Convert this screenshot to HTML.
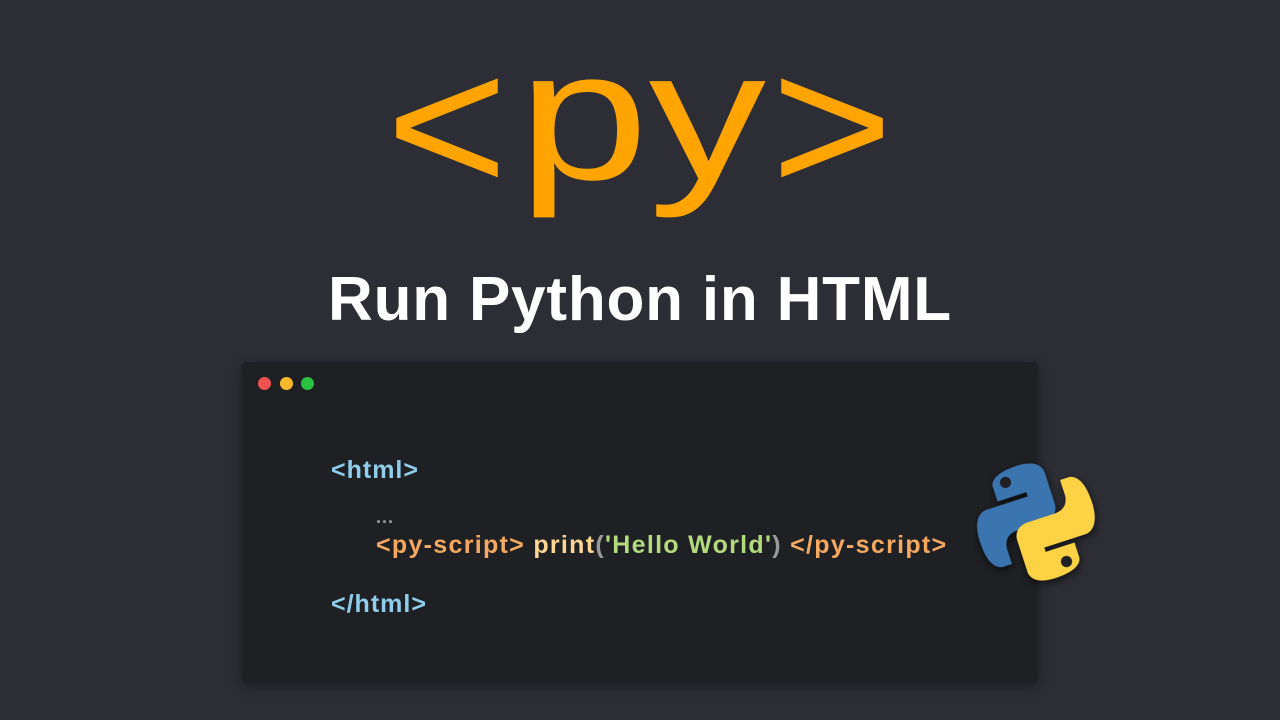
<!DOCTYPE html>
<html><head><meta charset="utf-8"><style>
body{margin:0;width:1280px;height:720px;background:#2d2e35;overflow:hidden;position:relative;font-family:"Liberation Sans",sans-serif}
.title{position:absolute;left:0;width:1280px;top:264px;text-align:center;color:#fff;font-weight:bold;font-size:62px;line-height:72px;letter-spacing:0.8px}
.card{position:absolute;left:242px;top:362px;width:796px;height:321px;background:#1f2024;border-radius:4px;box-shadow:0 4px 12px rgba(0,0,0,.35)}
.dot{position:absolute;top:15px;width:13px;height:13px;border-radius:50%}
.code{position:absolute;font-weight:bold;font-size:25px;white-space:pre;line-height:30px;letter-spacing:1px}
.b{color:#8fcdeb}.o{color:#f4a860}.y{color:#fcd692}.g{color:#b4da7e}.w{color:#9a9a9a}
</style></head><body>
<svg style="position:absolute;left:0;top:0" width="1280" height="260">
<g fill="#ffa400" font-family="Liberation Sans, sans-serif">
<text x="386" y="192" font-size="195" textLength="122" lengthAdjust="spacingAndGlyphs">&lt;</text>
<text x="518" y="179" font-size="195" textLength="248" lengthAdjust="spacingAndGlyphs" transform="translate(0,179) scale(1,0.95) translate(0,-179)">py</text>
<text x="771" y="192" font-size="195" textLength="122" lengthAdjust="spacingAndGlyphs">&gt;</text>
</g></svg>
<div class="title">Run Python in HTML</div>
<div class="card">
<div class="dot" style="left:16px;background:#f0534f"></div>
<div class="dot" style="left:38px;background:#f7b92b"></div>
<div class="dot" style="left:59px;background:#29c140"></div>
<div class="code b" style="left:89px;top:93px">&lt;html&gt;</div>
<div class="code w" style="left:134px;top:140px;font-size:18px">...</div>
<div class="code" style="left:134px;top:168px;letter-spacing:1.3px"><span class="o">&lt;py-script&gt;</span> <span class="y">print</span><span class="w">(</span><span class="g">'Hello World'</span><span class="w">)</span> <span class="o">&lt;/py-script&gt;</span></div>
<div class="code b" style="left:89px;top:227px">&lt;/html&gt;</div>
</div>
<svg style="position:absolute;left:966px;top:452px" width="140" height="140" viewBox="0 0 140 140">
<g transform="translate(70,70) rotate(-18) scale(1.12) translate(-55,-55)" filter="drop-shadow(0 3px 4px rgba(0,0,0,.6))">
<path d="M54 2c-28 0-26 12-26 12v13h27v4H17S2 29 2 57s13 27 13 27h8V71s-1-14 14-14h26s13 0 13-13V16S78 2 54 2z" fill="#3a75b0"/>
<circle cx="40" cy="13" r="5" fill="#1f2024"/>
<path d="M56 108c28 0 26-12 26-12V83H55v-4h38s15 2 15-26-13-27-13-27h-8v13s1 14-14 14H47s-13 0-13 13v28s-2 14 22 14z" fill="#fdd345"/>
<circle cx="70" cy="97" r="5" fill="#1f2024"/>
</g></svg>
</body></html>
